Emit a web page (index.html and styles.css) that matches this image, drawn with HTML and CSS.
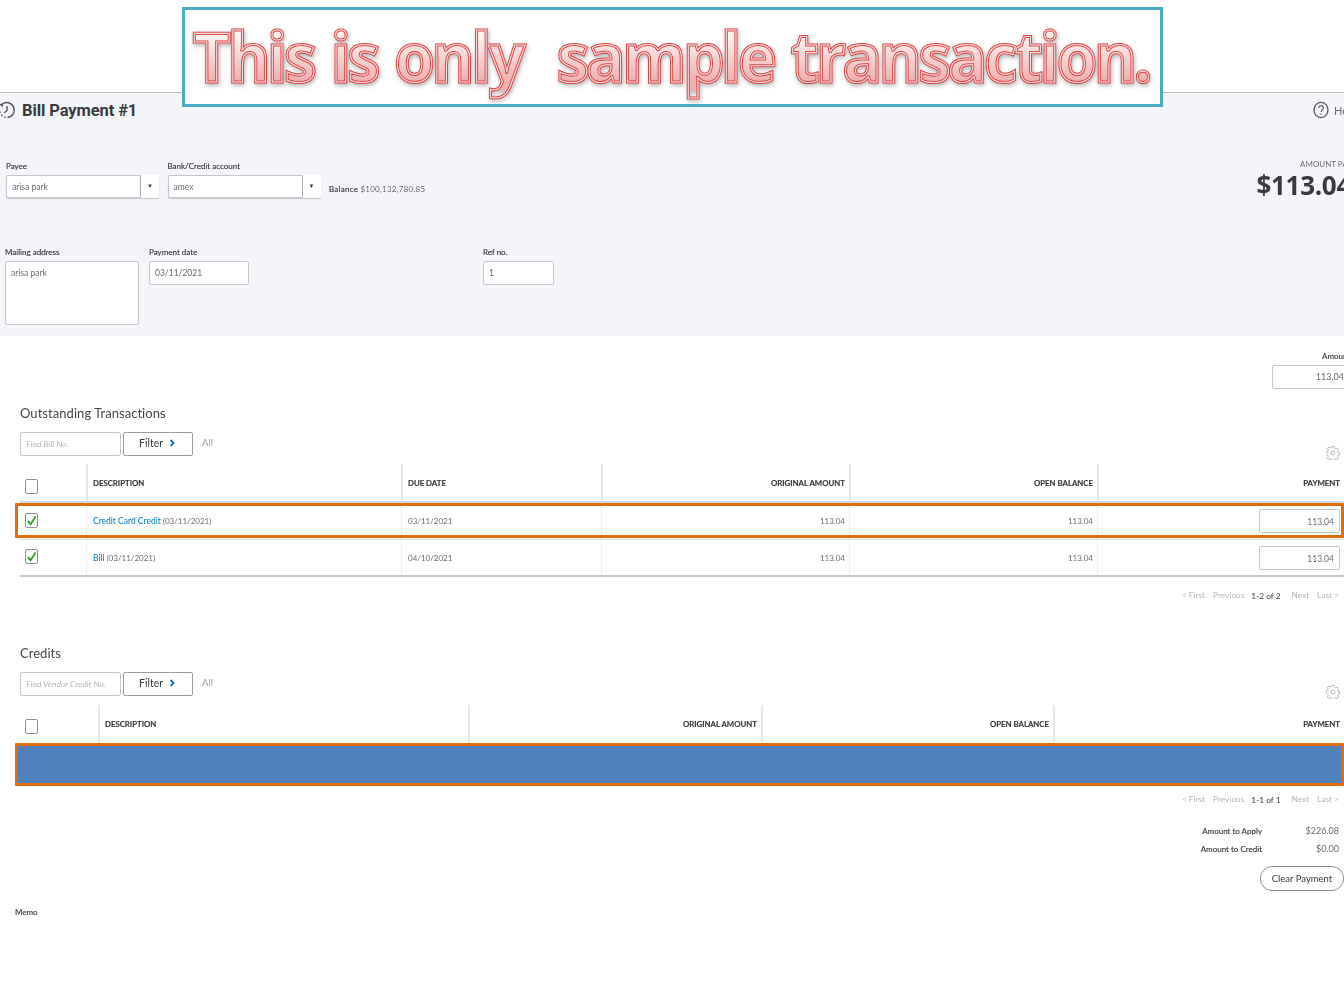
FILE: index.html
```html
<!DOCTYPE html>
<html lang="en">
<head>
<meta charset="utf-8">
<title>Bill Payment #1</title>
<link rel="stylesheet" href="styles.css">
</head>
<body>
<div class="stage">
  <main class="page">
    <section class="form-head">
      <div class="title-row">
        <svg class="history" viewBox="0 0 18 18" width="18" height="18"><path d="M4 3.2A7.5 7.5 0 1 1 9.500 16.500" fill="none" stroke="#55575a" stroke-width="1.4"/><path d="M1.800 10.500l.3 1.600M3.400 13.800l1.200 1.100M6.300 16l1.300.4M9 5v4.500l-3 2.500" fill="none" stroke="#55575a" stroke-width="1.4"/><path d="M1 3l3.800-.6.2 4z" fill="#55575a"/></svg>
        <h1>Bill Payment #1</h1>
        <div class="help">
          <svg viewBox="0 0 16 18" width="16" height="18"><ellipse cx="8" cy="9" rx="7" ry="7.6" fill="none" stroke="#55575a" stroke-width="1.3"/><path d="M5.8 7c0-3 4.6-3 4.6-.2 0 1.800-2.300 1.900-2.300 3.900" fill="none" stroke="#55575a" stroke-width="1.2"/><circle cx="8.100" cy="13" r=".8" fill="#55575a"/></svg>
          <span>Help</span>
        </div>
      </div>
      <div class="field-row first">
        <div class="field">
          <label>Payee</label>
          <div class="combo"><span class="input">arisa park</span><span class="caret">▼</span></div>
        </div>
        <div class="field">
          <label>Bank/Credit account</label>
          <div class="combo"><span class="input">amex</span><span class="caret">▼</span></div>
        </div>
        <div class="balance"><b>Balance</b> $100,132,780.85</div>
        <div class="amount-paid">
          <div class="paid-label">AMOUNT PAID</div>
          <div class="paid-value">$113.04</div>
        </div>
      </div>
      <div class="field-row second">
        <div class="field address">
          <label>Mailing address</label>
          <div class="input area">arisa park</div>
        </div>
        <div class="field date">
          <label>Payment date</label>
          <div class="input">03/11/2021</div>
        </div>
        <div class="field ref">
          <label>Ref no.</label>
          <div class="input">1</div>
        </div>
      </div>
    </section>

    <div class="amount-block">
      <label>Amount</label>
      <div class="input amount-input">113.04</div>
    </div>

    <section class="outstanding">
      <h2>Outstanding Transactions</h2>
      <div class="tools">
        <span class="find">Find Bill No.</span>
        <span class="filter">Filter <svg viewBox="0 0 8 10" width="6" height="8"><path d="M2 1l4 4-4 4" fill="none" stroke="#0077c5" stroke-width="2.400"/></svg></span>
        <span class="all">All</span>
        <svg class="gear" viewBox="0 0 16 16" width="14" height="14"><circle cx="8" cy="8" r="2.300" fill="none" stroke="#a9abae"/><path d="M6.800 1h2.400l.4 2 1.500.7 1.800-1 1.500 1.800-1.200 1.600.4 1.500 1.900.7v2.300l-1.900.6-.5 1.500 1.200 1.700-1.600 1.500-1.800-1-1.400.6-.5 2H6.800l-.5-2-1.400-.6-1.800 1-1.600-1.500 1.200-1.700-.5-1.500L.3 9.500V7.300l1.900-.7.400-1.500-1.200-1.600 1.500-1.800 1.800 1 1.500-.7z" transform="translate(0 -.5)" fill="none" stroke="#a9abae" stroke-width="1"/></svg>
      </div>
      <div class="grid out head">
        <div class="cell check"><span class="box"></span></div>
        <div class="cell">DESCRIPTION</div>
        <div class="cell">DUE DATE</div>
        <div class="cell num">ORIGINAL AMOUNT</div>
        <div class="cell num">OPEN BALANCE</div>
        <div class="cell num">PAYMENT</div>
      </div>
      <div class="grid out row">
        <div class="cell check"><span class="box on"><svg viewBox="0 0 12 12" width="11" height="11"><path d="M2 6.500l3 3.500 5.500-8.500" fill="none" stroke="#2ca01c" stroke-width="2"/></svg></span></div>
        <div class="cell"><a>Credit Card Credit</a> (03/11/2021)</div>
        <div class="cell">03/11/2021</div>
        <div class="cell num">113.04</div>
        <div class="cell num">113.04</div>
        <div class="cell num"><span class="input pay">113.04</span></div>
      </div>
      <div class="grid out row last">
        <div class="cell check"><span class="box on"><svg viewBox="0 0 12 12" width="11" height="11"><path d="M2 6.500l3 3.500 5.500-8.500" fill="none" stroke="#2ca01c" stroke-width="2"/></svg></span></div>
        <div class="cell"><a>Bill</a> (03/11/2021)</div>
        <div class="cell">04/10/2021</div>
        <div class="cell num">113.04</div>
        <div class="cell num">113.04</div>
        <div class="cell num"><span class="input pay">113.04</span></div>
      </div>
      <div class="pager"><span>&lt; First</span><span>Previous</span><b>1-2 of 2</b><span>Next</span><span>Last &gt;</span></div>
    </section>

    <section class="credits">
      <h2>Credits</h2>
      <div class="tools">
        <span class="find">Find Vendor Credit No.</span>
        <span class="filter">Filter <svg viewBox="0 0 8 10" width="6" height="8"><path d="M2 1l4 4-4 4" fill="none" stroke="#0077c5" stroke-width="2.400"/></svg></span>
        <span class="all">All</span>
        <svg class="gear" viewBox="0 0 16 16" width="14" height="14"><circle cx="8" cy="8" r="2.300" fill="none" stroke="#a9abae"/><path d="M6.800 1h2.400l.4 2 1.500.7 1.800-1 1.500 1.800-1.200 1.600.4 1.500 1.900.7v2.300l-1.900.6-.5 1.500 1.200 1.700-1.600 1.500-1.800-1-1.400.6-.5 2H6.800l-.5-2-1.400-.6-1.800 1-1.600-1.500 1.200-1.700-.5-1.500L.3 9.500V7.300l1.900-.7.400-1.500-1.200-1.600 1.500-1.800 1.800 1 1.500-.7z" transform="translate(0 -.5)" fill="none" stroke="#a9abae" stroke-width="1"/></svg>
      </div>
      <div class="grid cred head">
        <div class="cell check"><span class="box"></span></div>
        <div class="cell">DESCRIPTION</div>
        <div class="cell num">ORIGINAL AMOUNT</div>
        <div class="cell num">OPEN BALANCE</div>
        <div class="cell num">PAYMENT</div>
      </div>
      <div class="empty-row"></div>
      <div class="pager"><span>&lt; First</span><span>Previous</span><b>1-1 of 1</b><span>Next</span><span>Last &gt;</span></div>
      <div class="totals">
        <div class="total"><b>Amount to Apply</b><span>$226.08</span></div>
        <div class="total"><b>Amount to Credit</b><span>$0.00</span></div>
      </div>
      <div class="clear"><span>Clear Payment</span></div>
    </section>

    <div class="memo">Memo</div>
  </main>

  <div class="banner"><span class="wordart" data-text="This is only&#160; sample transaction.">This is only&nbsp; sample transaction.</span></div>
  <div class="mark mark-row"></div>
  <div class="mark mark-fill"></div>
</div>
</body>
</html>
```
FILE: styles.css
```css
* { box-sizing: border-box; }
html, body { margin: 0; background: #fff; }
body { width: 1344px; height: 1008px; overflow: hidden; font-family: Lato, "Open Sans", sans-serif; color: #393a3d; }
.stage { position: relative; width: 1344px; height: 1008px; overflow: hidden; }
.page { width: 1360px; padding-top: 92px; filter: blur(0.5px); }

.form-head { height: 244px; background: #f3f5f9; border-top: 1px solid #bdbdbd; }
.title-row { display: flex; align-items: center; height: 34px; padding-right: 7px; }
.history { margin-left: -2px; flex: none; }
h1 { margin: 0 0 0 6px; font: 700 16.500px Roboto, sans-serif; letter-spacing: -0.1px; color: #393a3d; }
.help { margin-left: auto; display: flex; align-items: center; gap: 5px; font-size: 11px; color: #6b6c72; width: 40px; }
.help svg { flex: none; }

label { display: block; height: 12px; margin-bottom: 3px; font-size: 8px; line-height: 12px; color: #393a3d; -webkit-text-stroke: 0.15px #393a3d; }
.input { display: block; background: #fff; border: 1px solid #c4c7cc; border-radius: 2px; font-size: 8.5px; line-height: 22px; padding-left: 5px; color: #6b6c72; }

.field-row { display: flex; }
.first { margin-top: 33px; padding-left: 6px; gap: 8.500px; height: 86px; }
.combo { display: flex; width: 153px; height: 23px; background: #fff; border-radius: 2px; box-shadow: 0 1px 1px #c4c7cc; }
.combo .input { flex: none; width: 135px; height: 23px; border-right-color: #aeb1b6; border-radius: 2px 0 0 2px; }
.caret { flex: 1; text-align: center; font-size: 6px; line-height: 21px; color: #393a3d; }
.balance { margin: 23px 0 0 0; font-size: 8px; line-height: 12px; color: #6b6c72; letter-spacing: 0.25px; }
.balance b { font-weight: 400; color: #393a3d; -webkit-text-stroke: 0.15px #393a3d; }
.amount-paid { margin-left: auto; padding-right: 4px; text-align: right; }
.paid-label { height: 10px; font-size: 8px; line-height: 8px; color: #6b6c72; }
.paid-value { font: 700 26px/30px "Open Sans", sans-serif; letter-spacing: -0.3px; margin-right: 5px; color: #393a3d; }

.second { padding-left: 5px; gap: 10px; }
.address { width: 134px; }
.area { height: 64px; padding-top: 0; }
.date { width: 100px; }
.date .input, .ref .input { height: 24px; line-height: 22px; }
.ref { width: 71px; margin-left: 224px; }

.amount-block { width: 88px; margin: 14px 0 0 auto; font-size: 9px; text-align: left; }
.amount-block label { margin-bottom: 3px; padding-left: 50px; white-space: nowrap; }
.amount-input { height: 24px; text-align: right; padding-right: 15px; font-size: 9px; }

section.outstanding { padding: 14px 20px 0; }
section.credits { padding: 40px 20px 0; }
h2 { margin: 0; height: 20px; font: 400 13px/20px Lato, sans-serif; letter-spacing: 0.05px; color: #45474b; }
.tools { display: flex; align-items: center; height: 24px; margin-top: 9px; position: relative; }
.find { width: 101px; height: 24px; padding-left: 5px; border: 1px solid #c4c7cc; border-radius: 2px; font-size: 8.5px; font-style: italic; line-height: 22px; color: #b3b5b9; white-space: nowrap; overflow: hidden; }
.filter { display: flex; align-items: center; gap: 6px; width: 70px; height: 24px; margin-left: 2px; padding: 0 0 3px 15px; border: 1px solid #9a9ca1; border-radius: 2px; font-size: 10.500px; color: #393a3d; }
.all { margin: -3px 0 0 9px; font-size: 9.5px; color: #9a9ca1; }
.gear { margin: 17px 0 0 auto; }
.credits .gear { margin-top: 16px; }

.grid { display: grid; margin-right: -20px; }
.out { grid-template-columns: 67px 315px 200px 248px 248px 1fr; }
.cred { grid-template-columns: 79px 370px 293px 292px 1fr; }
.out > .check, .cred > .check { margin-right: 1px; }
.cell { display: flex; align-items: center; padding: 0 5px; font-size: 8px; color: #6b6c72; white-space: nowrap; gap: 2px; }
.cell:not(.check) { border-left: 1px dotted #dcdde0; margin-left: -1px; }
.num { justify-content: flex-end; }
.cell:last-child { padding-right: 20px; }
.check { padding-left: 5px; }
.head { height: 39px; margin-top: 8px; }
.head .cell { font-size: 7.800px; font-weight: 700; color: #393a3d; -webkit-text-stroke: 0.15px #393a3d; }
.head .cell:not(.check) { border-left: 2px solid #e6e7ea; padding-left: 5px; }
.head .check { padding-top: 7px; }
.credits .head .check { padding-top: 5px; }
.outstanding .head { border-bottom: 2px solid #d4d7dc; height: 39px; }
.row { height: 37px; border-bottom: 1px solid #dcdde0; }
.row.last { height: 37px; border-bottom: 2px solid #c6c8cc; }
.row .cell:not(.check) { padding-left: 6px; }
.row .check { padding-bottom: 2px; }
.box { display: flex; align-items: center; justify-content: center; width: 13px; height: 15px; background: #fff; border: 1px solid #8d9096; border-radius: 2px; }
a { color: #0077c5; font-size: 8.5px; }
.pay { width: 81px; height: 24px; text-align: right; padding: 0 5px 0 0; line-height: 24px; }
.pager { display: flex; justify-content: flex-end; gap: 8px; padding: 12px 1px 0 0; height: 26px; font-size: 8.3px; line-height: 12px; color: #b3b4b8; }
.pager b { font-weight: 400; color: #393a3d; margin: 1px 3px 0 -1px; }
.credits .pager { padding-top: 7px; height: 21px; }
.empty-row { height: 43px; }
.credits .head { height: 38px; margin-top: 9px; }
.totals { margin-top: 18px; display: flex; flex-direction: column; gap: 6px; }
.total { display: flex; justify-content: flex-end; height: 12px; font-size: 8px; line-height: 12px; color: #6b6c72; }
.total b { font-weight: 400; color: #393a3d; -webkit-text-stroke: 0.15px #393a3d; }
.total span { width: 78px; text-align: right; padding-right: 1px; font-size: 9px; }
.clear { display: flex; justify-content: flex-end; margin: 11px -4px 0 0; }
.clear span { width: 84px; height: 25px; border: 1px solid #8d9096; border-radius: 12px; text-align: center; font-size: 9.5px; line-height: 24px; color: #393a3d; }
.memo { margin: 15px 0 0 15px; font-size: 8px; line-height: 12px; color: #393a3d; -webkit-text-stroke: 0.15px #393a3d; }

.banner { position: absolute; left: 182px; top: 7px; width: 981px; height: 100px; background: #fff; border: 3px solid #4bacc6; display: flex; align-items: center; padding: 0 0 0 8px; }
.wordart { position: relative; font: 700 67.500px/1 "Open Sans", sans-serif; letter-spacing: -3px; word-spacing: 3.500px; white-space: nowrap; color: transparent; background: linear-gradient(#fdf2f2 20%, #eeb0b0 85%); -webkit-background-clip: text; background-clip: text; -webkit-text-stroke: 3.200px #d9484b; filter: drop-shadow(1px 2px 2px rgba(90, 90, 90, .45)) blur(0.3px); transform: scaleX(0.96); transform-origin: left center; }
.wordart::after { content: attr(data-text); position: absolute; left: 0; top: 0; -webkit-text-stroke: 1.100px #f9dcdc; }
.mark { position: absolute; border: 3px solid #e36c0a; border-radius: 1px; }
.mark-row { left: 15px; top: 503px; width: 1329px; height: 35px; }
.mark-fill { left: 15px; top: 743px; width: 1329px; height: 43px; background: #4f81bd; }
```
